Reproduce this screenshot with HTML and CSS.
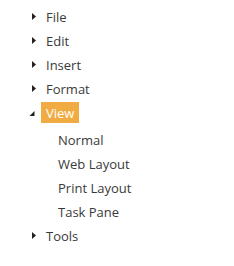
FILE: index.html
```html
<!DOCTYPE html>
<html lang="en">
<head>
    <meta charset="UTF-8">
    <meta name="viewport" content="width=device-width, initial-scale=1.0">
    <title>Menu Tree</title>
    <link rel="stylesheet" href="styles.css">
</head>
<body>
    <ul class="tree">
        <li class="node">
            <div class="node-row">
                <svg class="toggle" width="13" height="21" viewBox="0 0 13 21"><polygon points="4,7 8,10.5 4,14"/></svg>
                <span class="node-text">File</span>
            </div>
        </li>
        <li class="node">
            <div class="node-row">
                <svg class="toggle" width="13" height="21" viewBox="0 0 13 21"><polygon points="4,7 8,10.5 4,14"/></svg>
                <span class="node-text">Edit</span>
            </div>
        </li>
        <li class="node">
            <div class="node-row">
                <svg class="toggle" width="13" height="21" viewBox="0 0 13 21"><polygon points="4,7 8,10.5 4,14"/></svg>
                <span class="node-text">Insert</span>
            </div>
        </li>
        <li class="node">
            <div class="node-row">
                <svg class="toggle" width="13" height="21" viewBox="0 0 13 21"><polygon points="4,7 8,10.5 4,14"/></svg>
                <span class="node-text">Format</span>
            </div>
        </li>
        <li class="node expanded">
            <div class="node-row">
                <svg class="toggle" width="13" height="21" viewBox="0 0 13 21"><polygon points="6.5,9 6.5,14 1.5,14"/></svg>
                <span class="node-text selected">View</span>
            </div>
            <ul class="children">
                <li class="node"><div class="node-row"><span class="spacer"></span><span class="node-text">Normal</span></div></li>
                <li class="node"><div class="node-row"><span class="spacer"></span><span class="node-text">Web Layout</span></div></li>
                <li class="node"><div class="node-row"><span class="spacer"></span><span class="node-text">Print Layout</span></div></li>
                <li class="node"><div class="node-row"><span class="spacer"></span><span class="node-text">Task Pane</span></div></li>
            </ul>
        </li>
        <li class="node">
            <div class="node-row">
                <svg class="toggle" width="13" height="21" viewBox="0 0 13 21"><polygon points="4,7 8,10.5 4,14"/></svg>
                <span class="node-text">Tools</span>
            </div>
        </li>
    </ul>
</body>
</html>
```

FILE: styles.css
```css
body, html {
    margin: 0;
    padding: 0;
    background: #fff;
    font-family: "Open Sans", Arial, sans-serif;
}

.tree {
    list-style: none;
    margin: 0;
    padding: 6px 0 0 28px;
}

.children {
    list-style: none;
    margin: 0;
    padding: 6px 0 0 12px;
}

.node-row {
    display: flex;
    align-items: flex-start;
    padding-bottom: 3px;
}

.toggle {
    display: block;
    flex: none;
    fill: #222;
}

.spacer {
    display: block;
    width: 13px;
    flex: none;
}

.node-text {
    font-size: 13px;
    line-height: 18px;
    padding: 2px 5px 1px;
    color: #3a3a3a;
    white-space: nowrap;
}

.node-text.selected {
    background: #f0ac42;
    color: #fff;
}

.expanded > .node-row {
    padding-bottom: 0;
}
```
